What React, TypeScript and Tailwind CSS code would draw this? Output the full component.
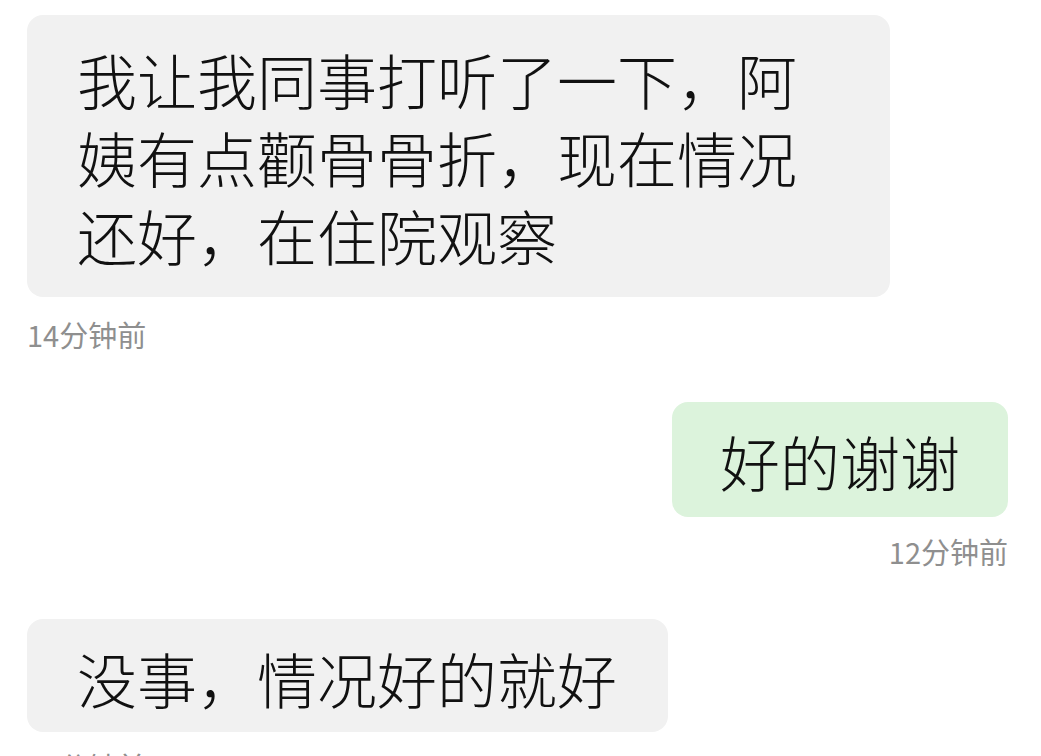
const font = { fontFamily: '"Noto Sans CJK SC", "Noto Sans", sans-serif' };

function Stamp({ text, right }: { text: string; right?: boolean }) {
  return (
    <div
      className={`text-[29px] leading-[34px] text-[#8f8f8f] ${right ? "self-end" : "self-start"}`}
    >
      {text}
    </div>
  );
}

export default function App() {
  return (
    <div
      className="w-[1041px] h-[756px] overflow-hidden bg-white flex flex-col pt-[15px] pl-[27px] pr-[33px]"
      style={font}
    >
      {/* incoming */}
      <div className="self-start w-[863px] bg-[#f1f1f1] rounded-[16px] pl-[50px] pr-[60px] pt-[25px] pb-[23px] text-[60px] leading-[78px] font-light text-[#111]">
        我让我同事打听了一下，阿
        <br />
        姨有点颧骨骨折，现在情况
        <br />
        还好，在住院观察
      </div>
      <div className="mt-[20px]">
        <Stamp text="14分钟前" />
      </div>

      {/* outgoing */}
      <div className="self-end mt-[51px] bg-[#dcf3dc] rounded-[16px] pl-[48px] pr-[48px] pt-[20px] pb-[17px] text-[60px] leading-[78px] font-light text-[#111]">
        好的谢谢
      </div>
      <div className="self-end mt-[17px]">
        <Stamp text="12分钟前" right />
      </div>

      {/* incoming */}
      <div className="self-start mt-[51px] bg-[#f1f1f1] rounded-[16px] pl-[50px] pr-[51px] pt-[20px] pb-[15px] text-[60px] leading-[78px] font-light text-[#111]">
        没事，情况好的就好
      </div>
      <div className="mt-[17px]">
        <Stamp text="10分钟前" />
      </div>
    </div>
  );
}
